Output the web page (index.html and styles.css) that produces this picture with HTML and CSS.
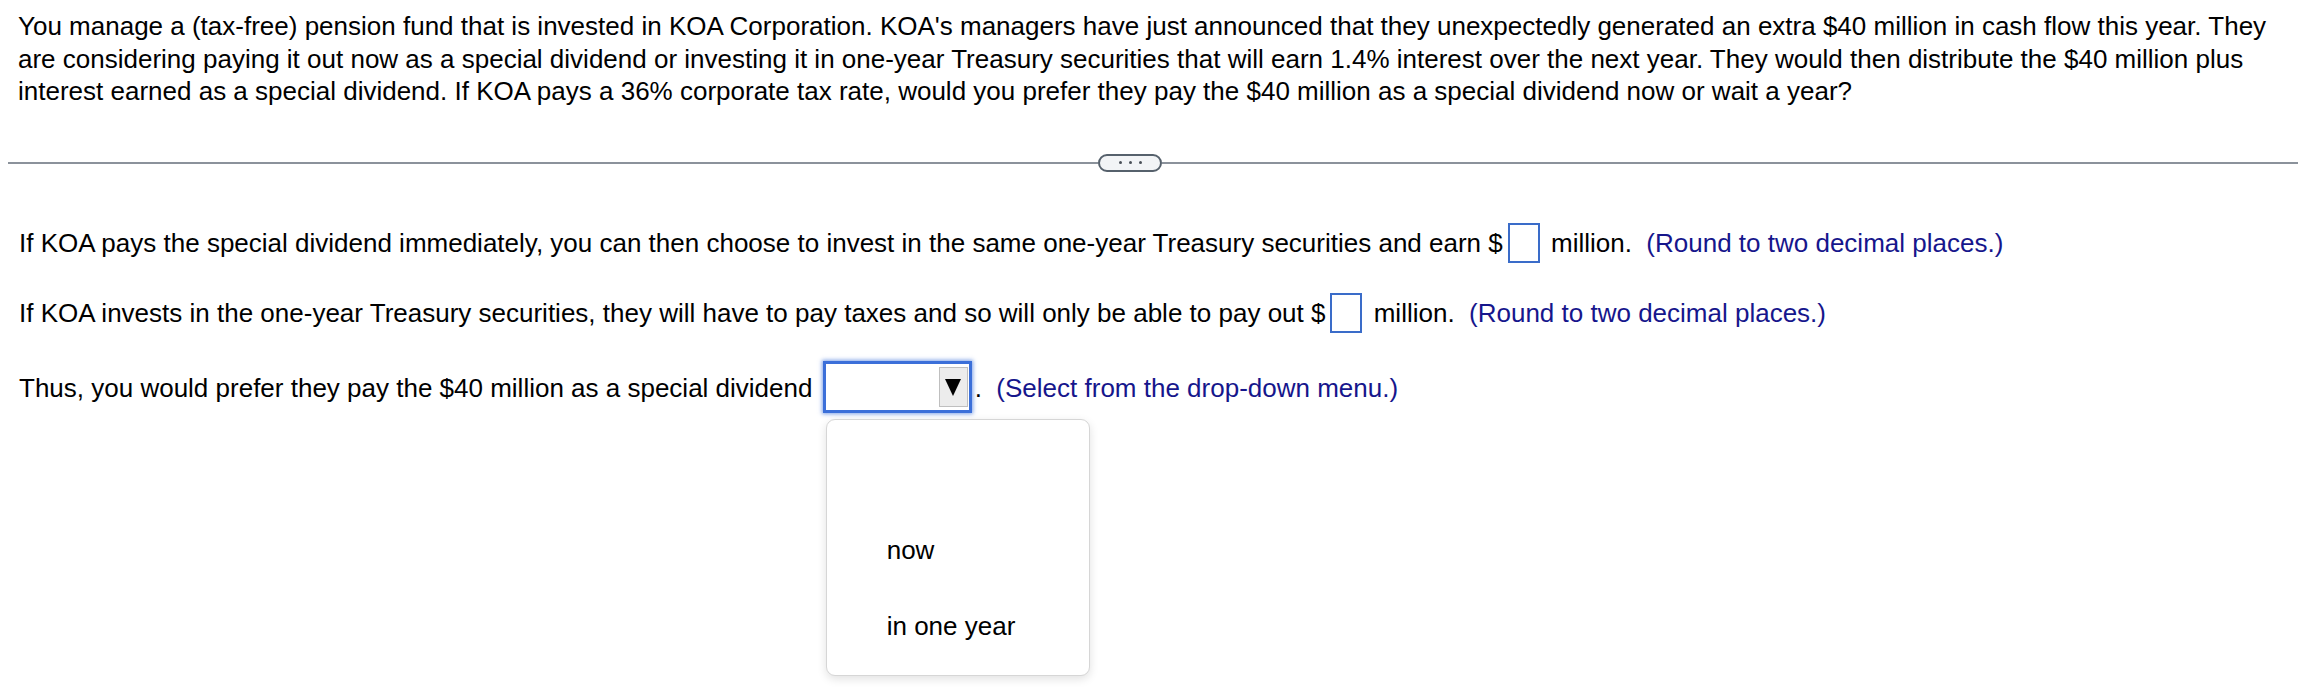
FILE: index.html
```html
<!DOCTYPE html>
<html>
<head>
<meta charset="utf-8">
<link rel="stylesheet" href="styles.css">
</head>
<body>
<div class="page">
  <p class="question">You manage a (tax-free) pension fund that is invested in KOA Corporation. KOA's managers have just announced that they unexpectedly generated an extra $40 million in cash flow this year. They are considering paying it out now as a special dividend or investing it in one-year Treasury securities that will earn 1.4% interest over the next year. They would then distribute the $40 million plus interest earned as a special dividend. If KOA pays a 36% corporate tax rate, would you prefer they pay the $40 million as a special dividend now or wait a year?</p>
  <div class="divider">
    <span class="divider-left"></span>
    <span class="more"><i></i><i></i><i></i></span>
    <span class="divider-right"></span>
  </div>
  <div class="answers">
    <p class="row first">If KOA pays the special dividend immediately, you can then choose to invest in the same one-year Treasury securities and earn $<span class="input"></span> million.&nbsp; <span class="hint">(Round to two decimal places.)</span></p>
    <p class="row second">If KOA invests in the one-year Treasury securities, they will have to pay taxes and so will only be able to pay out $<span class="input"></span> million.&nbsp; <span class="hint">(Round to two decimal places.)</span></p>
    <p class="row">Thus, you would prefer they pay the $40 million as a special dividend <span class="select-wrap"><span class="select"><span class="arrow"><svg width="16" height="18" viewBox="0 0 16 18"><polygon points="0,1 16,1 8,18" fill="#000"/></svg></span></span><span class="menu"><span class="option">now</span><span class="option">in one year</span></span></span>.&nbsp; <span class="hint">(Select from the drop-down menu.)</span></p>
  </div>
</div>
</body>
</html>
```
FILE: styles.css
```css
html, body {
  margin: 0;
  padding: 0;
  background: #fff;
}
body {
  font-family: "Liberation Sans", Arial, Helvetica, sans-serif;
  font-size: 26px;
  color: #000;
}
.page {
  box-sizing: border-box;
  min-height: 700px;
  padding: 10px 0 0 8px;
}
.question {
  margin: 0;
  padding: 0 8px 0 10px;
  line-height: 32.5px;
}
.divider {
  display: flex;
  align-items: center;
  margin-top: 46px;
  height: 18px;
}
.divider-left {
  width: 1090px;
  height: 2px;
  background: #8b929b;
}
.divider-right {
  flex: 1;
  height: 2px;
  background: #8b929b;
}
.more {
  box-sizing: border-box;
  width: 64px;
  height: 18px;
  border: 2px solid #56616c;
  border-radius: 9px;
  background: #f2f4f6;
  display: flex;
  align-items: center;
  justify-content: center;
  gap: 7px;
}
.more i {
  width: 3px;
  height: 3px;
  border-radius: 50%;
  background: #4a5058;
}
.answers {
  padding-left: 11px;
  margin-top: 51.5px;
}
.row {
  margin: 0;
  line-height: 40px;
}
.row.first {
  margin-bottom: 30px;
}
.row.second {
  margin-bottom: 28px;
}
.input {
  display: inline-block;
  box-sizing: border-box;
  width: 32px;
  height: 40px;
  border: 2px solid #3a6cc9;
  background: #fff;
  vertical-align: -11px;
  margin: 0 4px 0 5px;
}
.hint {
  color: #16168c;
}
.select-wrap {
  position: relative;
  display: inline-block;
  font-size: 0;
  line-height: 0;
  vertical-align: -16px;
  margin-left: 3px;
  margin-right: 3px;
}
.select {
  display: inline-block;
  overflow: hidden;
  box-sizing: border-box;
  width: 149px;
  height: 52px;
  border: 3px solid #3b6fd9;
  box-shadow: 0 0 4px 1px rgba(70, 120, 220, 0.7);
  background: #fff;
  padding: 3px 1px 0 0;
}
.arrow {
  box-sizing: border-box;
  width: 29px;
  height: 40px;
  margin-left: auto;
  background: #ececec;
  border: 1px solid #bfbfbf;
  display: flex;
  align-items: center;
  justify-content: center;
}
.menu {
  position: absolute;
  left: 3px;
  top: 58px;
  box-sizing: border-box;
  width: 264px;
  height: 257px;
  background: #fff;
  border: 1px solid #d6d6d6;
  border-radius: 9px;
  box-shadow: 0 3px 10px rgba(0, 0, 0, 0.12);
  display: flex;
  flex-direction: column;
  justify-content: flex-end;
  padding: 0 0 11px 60px;
  font-size: 26px;
  line-height: 76px;
}
.option {
  display: block;
}
```
